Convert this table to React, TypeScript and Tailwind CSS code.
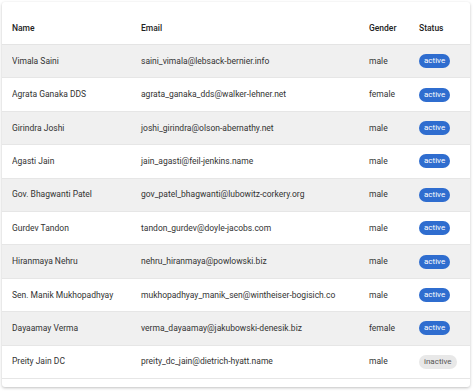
const users = [
  { name: "Vimala Saini", email: "saini_vimala@lebsack-bernier.info", gender: "male", status: "active" },
  { name: "Agrata Ganaka DDS", email: "agrata_ganaka_dds@walker-lehner.net", gender: "female", status: "active" },
  { name: "Girindra Joshi", email: "joshi_girindra@olson-abernathy.net", gender: "male", status: "active" },
  { name: "Agasti Jain", email: "jain_agasti@feil-jenkins.name", gender: "male", status: "active" },
  { name: "Gov. Bhagwanti Patel", email: "gov_patel_bhagwanti@lubowitz-corkery.org", gender: "male", status: "active" },
  { name: "Gurdev Tandon", email: "tandon_gurdev@doyle-jacobs.com", gender: "male", status: "active" },
  { name: "Hiranmaya Nehru", email: "nehru_hiranmaya@powlowski.biz", gender: "male", status: "active" },
  { name: "Sen. Manik Mukhopadhyay", email: "mukhopadhyay_manik_sen@wintheiser-bogisich.co", gender: "male", status: "active" },
  { name: "Dayaamay Verma", email: "verma_dayaamay@jakubowski-denesik.biz", gender: "female", status: "active" },
  { name: "Preity Jain DC", email: "preity_dc_jain@dietrich-hyatt.name", gender: "male", status: "inactive" },
];

const cols = "grid grid-cols-[129px_228px_50px_1fr]";

function Badge({ status }: { status: string }) {
  return status === "active" ? (
    <span className="inline-flex h-[14px] items-center rounded-full bg-[#2f6dcf] px-[5px] text-[8px] text-white">
      active
    </span>
  ) : (
    <span className="inline-flex h-[14px] items-center rounded-full bg-[#e8e8e8] px-[5px] text-[8px] text-[#555]">
      inactive
    </span>
  );
}

export default function App() {
  return (
    <div className="h-[391px] w-[474px] bg-white p-[2px] pr-[4px] font-['Roboto',sans-serif]">
      <div className="rounded-[3px] bg-white pb-[8px] shadow-[0_1px_3px_rgba(0,0,0,0.25)]">
        <div className={`${cols} h-[43px] items-end border-b border-[#e4e4e4] pb-[9px] pl-[10px] text-[8.5px] font-medium text-[#222]`}>
          <div>Name</div>
          <div>Email</div>
          <div>Gender</div>
          <div>Status</div>
        </div>
        {users.map((u, i) => (
          <div
            key={u.email}
            className={`${cols} h-[33.4px] items-center border-b border-[#e6e6e6] pl-[10px] text-[8.5px] text-[#333] ${i % 2 === 0 ? "bg-[#f0f0f0]" : "bg-white"}`}
          >
            <div className="truncate">{u.name}</div>
            <div className="whitespace-nowrap">{u.email}</div>
            <div>{u.gender}</div>
            <div>
              <Badge status={u.status} />
            </div>
          </div>
        ))}
      </div>
    </div>
  );
}
